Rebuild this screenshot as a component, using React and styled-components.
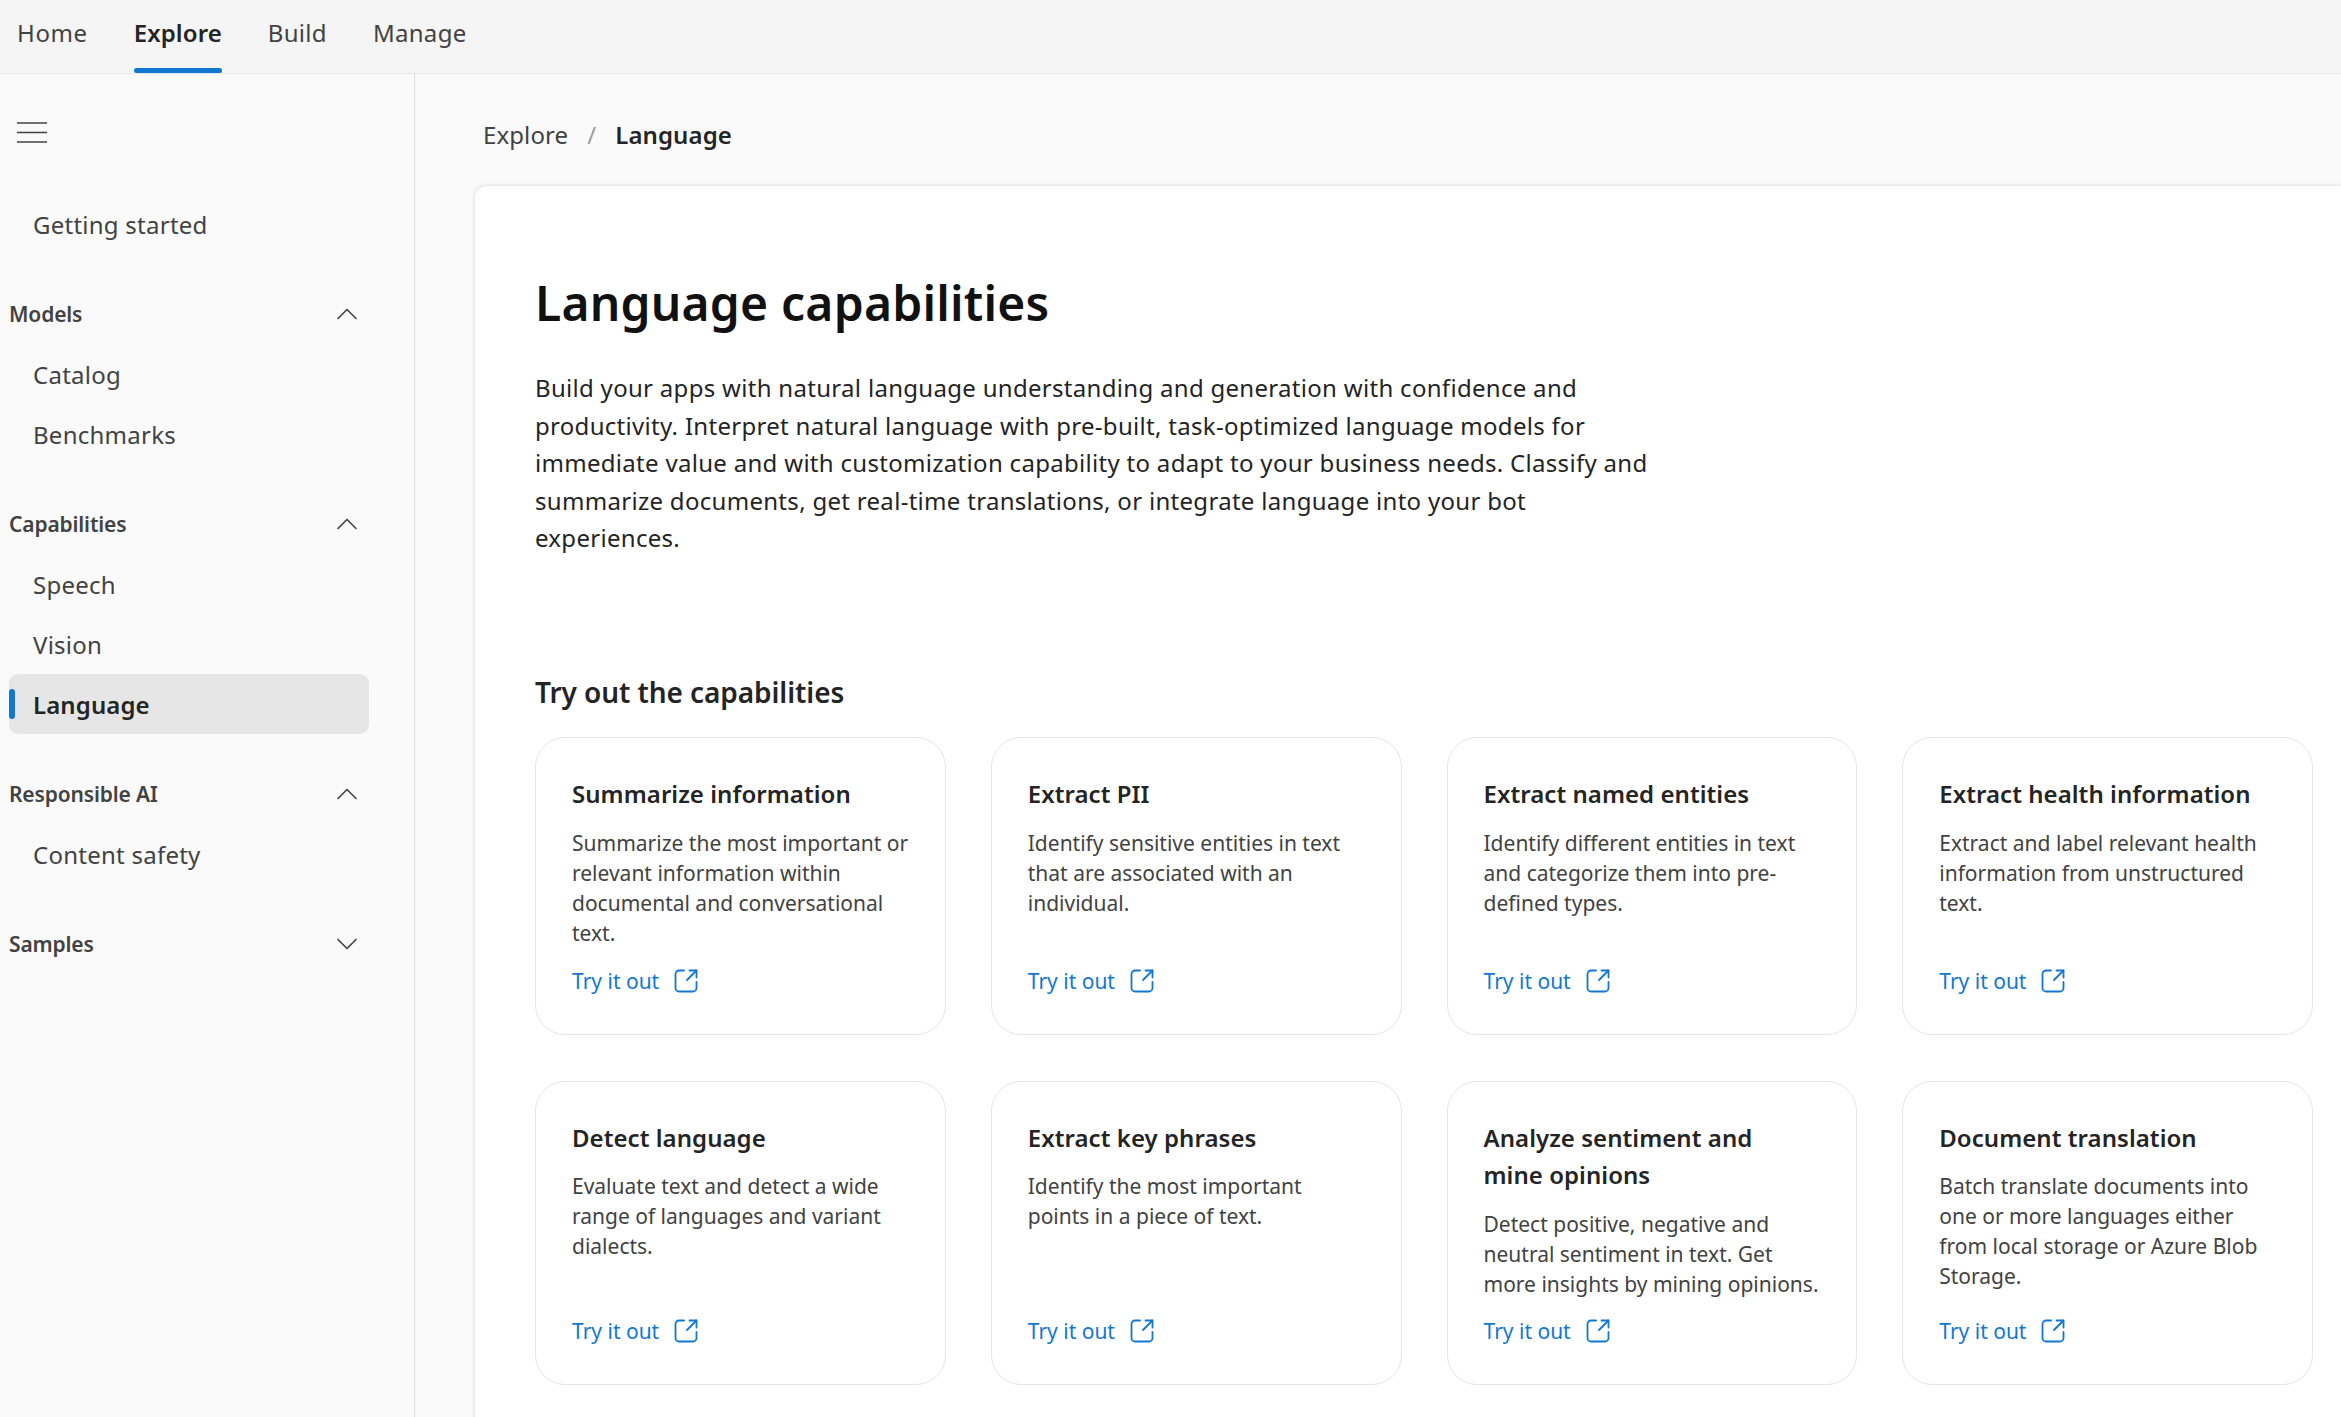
import styled, { createGlobalStyle } from "styled-components";
import { ChevronUp, ChevronDown } from "lucide-react";

const GlobalStyle = createGlobalStyle`
  * {
    box-sizing: border-box;
  }

  html,
  body {
    margin: 0;
    height: 100%;
    overflow: hidden;
    background: #fafafa;
    font-family: "Noto Sans", "Open Sans", sans-serif;
    color: #242424;
  }
`;

const Page = styled.div`
  display: flex;
  flex-direction: column;
  height: 1417px;
`;

const TopBar = styled.nav`
  display: flex;
  gap: 46px;
  flex: none;
  height: 74px;
  padding-left: 17px;
  background: #f5f5f5;
  border-bottom: 1px solid #e6e6e6;
`;

const Tab = styled.a`
  position: relative;
  height: 73px;
  padding-top: 14px;
  font-size: 24px;
  line-height: 38px;
  letter-spacing: ${(props) => (props.$active ? "0.1px" : "0.3px")};
  color: ${(props) => (props.$active ? "#242424" : "#424242")};
  font-weight: ${(props) => (props.$active ? 600 : 400)};

  &:first-child {
    letter-spacing: 0.6px;
  }

  &::after {
    content: "";
    display: ${(props) => (props.$active ? "block" : "none")};
    position: absolute;
    left: 0;
    right: 0;
    bottom: 0;
    height: 5px;
    border-radius: 3px;
    background: #1277d3;
  }
`;

const Body = styled.div`
  display: flex;
  flex: 1;
  min-height: 0;
`;

const Sidebar = styled.aside`
  flex: none;
  width: 415px;
  padding: 48px 0 0 9px;
  border-right: 1px solid #e0e0e0;
`;

const Hamburger = styled.svg`
  display: block;
  width: 30px;
  height: 21px;
  margin: 0 0 51px 8px;
`;

const NavGroup = styled.div`
  width: 360px;
  margin-bottom: 30px;
`;

const GroupHeader = styled.div`
  display: flex;
  align-items: center;
  justify-content: space-between;
  height: 60px;
  padding-right: 4px;
  font-size: 21px;
  font-weight: 600;
  letter-spacing: -0.15px;
  color: #424242;
`;

const NavItem = styled.a`
  position: relative;
  display: flex;
  align-items: center;
  height: 60px;
  padding-left: 24px;
  font-size: 24px;
  letter-spacing: ${(props) => (props.$active ? "0.1px" : "0.25px")};
  border-radius: 9px;
  color: ${(props) => (props.$active ? "#242424" : "#424242")};
  font-weight: ${(props) => (props.$active ? 600 : 400)};
  background: ${(props) => (props.$active ? "#e6e6e6" : "transparent")};

  &::before {
    content: "";
    display: ${(props) => (props.$active ? "block" : "none")};
    position: absolute;
    left: 0;
    top: 15px;
    width: 6px;
    height: 30px;
    border-radius: 3px;
    background: #1277d3;
  }
`;

const Main = styled.main`
  flex: 1;
  min-width: 0;
  padding-left: 60px;
`;

const Breadcrumb = styled.div`
  display: flex;
  align-items: center;
  height: 38px;
  margin: 41px 0 33px;
  padding-left: 8px;
  font-size: 24px;
  letter-spacing: 0.1px;
  color: #424242;
`;

const Crumb = styled.span`
  color: ${(props) => (props.$current ? "#242424" : "#424242")};
  font-weight: ${(props) => (props.$current ? 600 : 400)};
`;

const CrumbDivider = styled.span`
  margin: 0 19px;
  color: #9e9e9e;
`;

const Panel = styled.section`
  height: 1240px;
  padding: 87px 28px 0 60px;
  background: #ffffff;
  border-top-left-radius: 12px;
  box-shadow: 0 0 5px rgba(0, 0, 0, 0.14);
`;

const Title = styled.h1`
  margin: 0 0 36px;
  font-size: 48px;
  line-height: 60px;
  font-weight: 600;
  letter-spacing: 0.2px;
  color: #111111;
`;

const Description = styled.p`
  width: 1125px;
  margin: 0 0 115.5px;
  font-size: 24px;
  line-height: 37.5px;
  letter-spacing: 0.3px;
  color: #242424;
`;

const SectionTitle = styled.h2`
  margin: 0 0 25px;
  font-size: 28px;
  line-height: 40px;
  font-weight: 600;
  letter-spacing: -0.08px;
  color: #242424;
`;

const CardGrid = styled.div`
  display: grid;
  grid-template-columns: repeat(4, 1fr);
  grid-template-rows: 298px 304.5px;
  gap: 45.5px 45px;
`;

const Card = styled.article`
  display: flex;
  flex-direction: column;
  padding: 37px 36px 38.5px;
  border: 1.5px solid #e6e6e6;
  border-radius: 30px;
`;

const CardTitle = styled.h3`
  margin: 0 0 15px;
  padding-right: 12px;
  font-size: 24px;
  line-height: 37.5px;
  font-weight: 600;
  letter-spacing: 0.05px;
  color: #242424;
`;

const CardText = styled.p`
  margin: 0;
  font-size: 21px;
  line-height: 30px;
  color: #424242;
`;

const TryLink = styled.a`
  display: flex;
  align-items: center;
  gap: 15px;
  margin-top: auto;
  height: 30px;
  font-size: 21px;
  color: #1277d3;
`;

const OpenIcon = () => (
  <svg width="24" height="24" viewBox="0 0 24 24" fill="none" stroke="currentColor" strokeWidth="1.8" strokeLinecap="round" strokeLinejoin="round">
    <path d="M10 1.5H5A3.5 3.5 0 0 0 1.5 5v14A3.5 3.5 0 0 0 5 22.5h14a3.5 3.5 0 0 0 3.5-3.5v-6" />
    <path d="M15.5 1.5h7V8.5" />
    <path d="M22.5 1.5L13 11" />
  </svg>
);

const navGroups = [
  { label: "Models", open: true, items: ["Catalog", "Benchmarks"] },
  { label: "Capabilities", open: true, items: ["Speech", "Vision", "Language"] },
  { label: "Responsible AI", open: true, items: ["Content safety"] },
  { label: "Samples", open: false, items: [] },
];

const capabilities = [
  { title: "Summarize information", text: "Summarize the most important or relevant information within documental and conversational text." },
  { title: "Extract PII", text: "Identify sensitive entities in text that are associated with an individual." },
  { title: "Extract named entities", text: "Identify different entities in text and categorize them into pre-defined types." },
  { title: "Extract health information", text: "Extract and label relevant health information from unstructured text." },
  { title: "Detect language", text: "Evaluate text and detect a wide range of languages and variant dialects." },
  { title: "Extract key phrases", text: "Identify the most important points in a piece of text." },
  { title: "Analyze sentiment and mine opinions", text: "Detect positive, negative and neutral sentiment in text. Get more insights by mining opinions." },
  { title: "Document translation", text: "Batch translate documents into one or more languages either from local storage or Azure Blob Storage." },
];

export default function App() {
  return (
    <Page>
      <GlobalStyle />
      <TopBar>
        <Tab>Home</Tab>
        <Tab $active>Explore</Tab>
        <Tab>Build</Tab>
        <Tab>Manage</Tab>
      </TopBar>
      <Body>
        <Sidebar>
          <Hamburger viewBox="0 0 30 21" fill="none" stroke="#424242" strokeWidth="1.5">
            <path d="M0 1h30M0 10.5h30M0 20h30" />
          </Hamburger>
          <NavGroup>
            <NavItem>Getting started</NavItem>
          </NavGroup>
          {navGroups.map((group) => (
            <NavGroup key={group.label}>
              <GroupHeader>
                {group.label}
                {group.open ? <ChevronUp size={36} strokeWidth={1.1} /> : <ChevronDown size={36} strokeWidth={1.1} />}
              </GroupHeader>
              {group.items.map((item) => (
                <NavItem key={item} $active={item === "Language"}>
                  {item}
                </NavItem>
              ))}
            </NavGroup>
          ))}
        </Sidebar>
        <Main>
          <Breadcrumb>
            <Crumb>Explore</Crumb>
            <CrumbDivider>/</CrumbDivider>
            <Crumb $current>Language</Crumb>
          </Breadcrumb>
          <Panel>
            <Title>Language capabilities</Title>
            <Description>
              Build your apps with natural language understanding and generation with confidence and productivity. Interpret natural language with pre-built, task-optimized language models for immediate value and with customization capability to adapt to your business needs. Classify and summarize documents, get real-time translations, or integrate language into your bot experiences.
            </Description>
            <SectionTitle>Try out the capabilities</SectionTitle>
            <CardGrid>
              {capabilities.map((item) => (
                <Card key={item.title}>
                  <CardTitle>{item.title}</CardTitle>
                  <CardText>{item.text}</CardText>
                  <TryLink>
                    Try it out
                    <OpenIcon />
                  </TryLink>
                </Card>
              ))}
            </CardGrid>
          </Panel>
        </Main>
      </Body>
    </Page>
  );
}
